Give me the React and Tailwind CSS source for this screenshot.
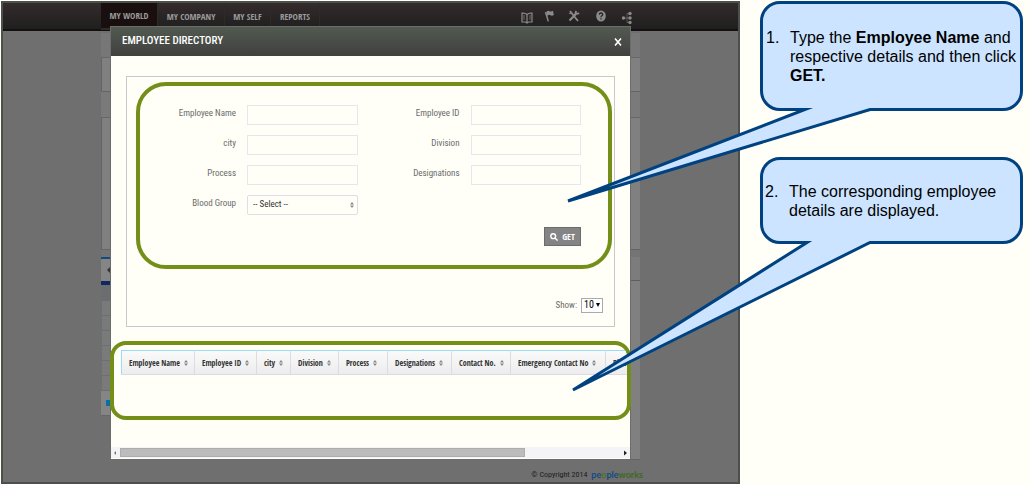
const dirLabel = 'text-right text-[9px] leading-4 text-[#6a6a6a] font-["Roboto_Condensed","Liberation_Sans",sans-serif]';

const navItems = [
  { label: 'MY WORLD', cls: 'w-[57px] bg-[#190f0f] border-b-2 border-[#0d4a66]' },
  { label: 'MY COMPANY', cls: 'w-[67px]' },
  { label: 'MY SELF', cls: 'w-[46px]' },
  { label: 'REPORTS', cls: 'w-[49px]' },
];

const columns = [
  ['Employee Name', 'w-[73px]'],
  ['Employee ID', 'w-[62px]'],
  ['city', 'w-[34px]'],
  ['Division', 'w-[48px]'],
  ['Process', 'w-[49px]'],
  ['Designations', 'w-[64px]'],
  ['Contact No.', 'w-[59px]'],
  ['Emergency Contact No', 'w-[95px]'],
  ['Blood Group', 'w-[70px]'],
];

function Sorter() {
  return (
    <svg viewBox="0 0 4 6" className="block h-[6px] w-[4px] shrink-0" fill="#888">
      <path d="M2 0L4 2.4H0zM2 6L0 3.6H4z" />
    </svg>
  );
}

function TopIcons() {
  return (
    <div className="flex h-[26px] items-center text-[#8b8b8b]">
      <button aria-label="Handbook" className="flex w-[22px] justify-center pt-1">
        <svg viewBox="0 0 12 12" className="size-3" fill="none" stroke="currentColor" strokeWidth="1.2">
          <path d="M6 2.5Q4 .8 1 1.2V10h3.5L6 11l1.500-1H11V1.200Q8 .8 6 2.500zV11" />
          <path d="M3 3v5M9 3v5" strokeWidth=".7" />
        </svg>
      </button>
      <button aria-label="Flag" className="flex w-[22px] justify-center">
        <svg viewBox="0 0 10 12" className="h-3 w-[10px]" fill="currentColor">
          <path d="M.8 2.200l1.500-.5L5 11.200l-1.400.3z" />
          <path d="M2.300 2.200Q4 .2 5.600 1.200T9 .8L9.800 5Q8 6.200 6.500 5.200T3.600 6z" />
        </svg>
      </button>
      <button aria-label="Tools" className="flex w-[27px] justify-center">
        <svg viewBox="0 0 12 12" className="size-3" fill="none" stroke="currentColor">
          <path d="M2 1l3.500 4.500L10 11" strokeWidth="1.800" />
          <path d="M1.500 10.500L8 4" strokeWidth="2.200" />
          <path d="M8 .8L7.400 4l3.800-.6" strokeWidth="1.800" />
          <path d="M1 3.500L4 3" />
        </svg>
      </button>
      <button aria-label="Help" className="flex w-[27px] justify-center">
        <svg viewBox="0 0 12 12" className="size-3">
          <ellipse cx="6" cy="6" rx="4.800" ry="5.600" fill="currentColor" />
          <path d="M4.300 4.600Q4.500 3 6 3T7.700 4.500Q7.700 5.300 6.800 5.800T6 7.300M6 8.200V9.500" fill="none" stroke="#242424" strokeWidth="1.300" />
        </svg>
      </button>
      <button aria-label="Organisation" className="flex w-[26px] justify-center pt-1">
        <svg viewBox="0 0 12 14" className="h-[14px] w-3" fill="currentColor">
          <circle cx="2.500" cy="7" r="1.700" />
          <circle cx="9" cy="2.500" r="1.700" />
          <circle cx="9" cy="7" r="1.700" />
          <circle cx="9" cy="11.500" r="1.700" />
          <path d="M4 7h4M6 7V2.500h2M6 7v4.500h2" fill="none" stroke="currentColor" strokeWidth=".5" />
        </svg>
      </button>
    </div>
  );
}

function LedgerRow() {
  return (
    <div className="flex h-[15px]">
      <div className="w-1/2 border-b border-l border-[#6b7075] bg-[#7a7a7a]" />
      <div className="w-1/2 bg-[#808080]" />
    </div>
  );
}

function Backdrop() {
  return (
    <div aria-hidden="true" className="flex flex-1 flex-col px-[98px] pt-[2px]">
      <div className="h-[25px] border-b border-[#686868] bg-[#777]" />
      <div className="h-[34px] border-l border-b border-[#646464] bg-[#808080]" />
      <div className="h-[26px] border-b border-[#666] bg-[#7a7a7a]" />
      <div className="h-[132px] border-l border-b border-[#646464] bg-[#808080]" />
      <div className="h-[7px] bg-[#747474]" />
      <div className="flex h-[24px]">
        <div className="flex w-1/2 items-center border-t-2 border-[#134a84] bg-[#858585] pl-[6px]">
          <svg viewBox="0 0 6 8" className="h-2 w-[6px]" fill="#333"><path d="M4 0v8L0 4z" /></svg>
        </div>
        <div className="w-1/2 border-b border-[#5e5e5e] bg-[#7c7c7c]" />
      </div>
      <div className="flex h-[4px]"><div className="w-1/2 bg-[#0c2a5c]" /><div className="w-1/2 bg-[#808080]" /></div>
      <div className="flex h-[16px]"><div className="w-1/2 bg-[#6b6d70]" /><div className="w-1/2 bg-[#808080]" /></div>
      <LedgerRow />
      <LedgerRow />
      <LedgerRow />
      <LedgerRow />
      <LedgerRow />
      <LedgerRow />
      <div className="flex h-[25px]">
        <div className="flex w-1/2 items-center border-b border-[#666] bg-[#858585] pl-[5px]">
          <div className="h-[6px] w-3 bg-[#0a6ea8]" />
        </div>
        <div className="w-1/2 bg-[#808080]" />
      </div>
      <div className="flex flex-1">
        <div className="w-1/2" />
        <div className="w-1/2 border-b border-[#646464] bg-[#808080]" />
      </div>
    </div>
  );
}

function Field({ id, label }) {
  return (
    <>
      <label htmlFor={id} className={dirLabel}>{label}</label>
      <input id={id} type="text" className="h-5 w-full min-w-0 border border-[#e6e6ee] bg-transparent px-1 text-[10px]" />
    </>
  );
}

function Dialog() {
  return (
    <section role="dialog" aria-labelledby="dlg-title" className="flex w-full flex-col border border-[#6a6d6a] bg-[#fffff8]">
      <header className="flex h-[29px] items-center justify-between bg-linear-to-b from-[#525a50] to-[#404040] pr-2 pl-[11px]">
        <h1 id="dlg-title" className='font-["Roboto_Condensed","Liberation_Sans",sans-serif] text-[11px] font-medium text-white'>EMPLOYEE DIRECTORY</h1>
        <button aria-label="Close" className="flex w-3 justify-end">
          <svg viewBox="0 0 8 8" className="size-2" stroke="#fff" strokeWidth="1.600"><path d="M1 .5l6 7M7 .5l-6 7" /></svg>
        </button>
      </header>
      <div className="mx-[15px] mt-[20px] border border-[#c9c9cd] pb-[13px]">
        <form className="mt-[5px] mr-[2px] ml-[9px] rounded-[30px] border-4 border-[#748f18] pt-[19px] pr-[27px] pb-[19px] pl-[16px]" onSubmit={(e) => e.preventDefault()}>
          <div className="grid grid-cols-[80px_1fr_91px_1fr] gap-x-[11px] gap-y-[10px]">
            <Field id="emp-name" label="Employee Name" />
            <Field id="emp-id" label="Employee ID" />
            <Field id="city" label="city" />
            <Field id="division" label="Division" />
            <Field id="process" label="Process" />
            <Field id="designations" label="Designations" />
            <label htmlFor="blood" className={dirLabel}>Blood Group</label>
            <div className="relative">
              <select id="blood" className='block h-5 w-full appearance-none rounded-[2px] border border-[#dedee6] bg-transparent pl-[5px] font-["Roboto_Condensed","Liberation_Sans",sans-serif] text-[9px] text-[#333]'>
                <option>-- Select --</option>
              </select>
              <span className="pointer-events-none absolute top-[7px] right-[4px]"><Sorter /></span>
            </div>
          </div>
          <div className="mt-[12px] flex justify-end">
            <button type="submit" className='flex h-[19px] w-[37px] items-center justify-center gap-1 border border-[#6c6c6c] bg-[#848484] font-["Open_Sans_Condensed","Roboto_Condensed","Liberation_Sans",sans-serif] text-[9px] font-bold text-white'>
              <svg viewBox="0 0 8 8" className="size-2" fill="none" stroke="#fff" strokeWidth="1.400"><circle cx="3.200" cy="3.200" r="2.400" /><path d="M5 5l2.600 2.600" /></svg>
              GET
            </button>
          </div>
        </form>
        <div className="mt-[28px] mr-[11px] flex items-center justify-end gap-1">
          <label htmlFor="show" className={dirLabel}>Show:</label>
          <div className="relative">
            <select id="show" className='block h-[15px] w-[22px] appearance-none border border-[#aaa] bg-white pl-[2px] font-["Roboto_Condensed","Liberation_Sans",sans-serif] text-[10px] leading-3 text-black'>
              <option>10</option>
            </select>
            <svg viewBox="0 0 4 4" className="pointer-events-none absolute top-[5px] right-[3px] size-1"><path d="M0 0h4L2 4z" /></svg>
          </div>
        </div>
      </div>
      <div className="-mx-px mt-[14px] h-[79px] overflow-hidden rounded-2xl border-4 border-[#748f18] pt-[5px] pl-[7px]">
        <div className="overflow-hidden">
          <table className="w-[554px] table-fixed border-t border-l border-[#9adcf5]">
            <thead>
              <tr className='h-6 bg-linear-to-b from-[#fafafa] to-[#ececee] font-["Open_Sans_Condensed","Roboto_Condensed","Liberation_Sans",sans-serif] text-[8px] font-bold text-[#333]'>
                {columns.map(([name, w]) => (
                  <th key={name} scope="col" className={`${w} border-r border-b border-[#dcdce0] whitespace-nowrap`}>
                    <span className="flex items-center gap-1 pl-[7px]">{name}<Sorter /></span>
                  </th>
                ))}
              </tr>
            </thead>
          </table>
        </div>
      </div>
      <div aria-hidden="true" className="mt-[27px] mb-px flex h-[11px] items-center bg-[#f4f4f6]">
        <svg viewBox="0 0 9 8" className="h-2 w-[9px]" fill="#777"><path d="M5 2v4L3 4z" /></svg>
        <div className="h-[9px] w-[78%] border border-[#adadad] bg-[#bcbcbc]" />
        <svg viewBox="0 0 9 8" className="ml-auto h-2 w-[9px]" fill="#222"><path d="M3 1.500v5L6 4z" /></svg>
      </div>
    </section>
  );
}

function Tail({ box, tip }) {
  const [left, right, y] = box;
  return (
    <svg aria-hidden="true" className="pointer-events-none absolute top-0 left-0 size-px overflow-visible">
      <path d={`M${left} ${y - 3}H${right}V${y + 2}H${left}z`} fill="#cce4ff" />
      <path d={`M${left - 6} ${y}H${left}L${tip[0]} ${tip[1]}L${right} ${y}h6`} fill="#cce4ff" stroke="#00427f" strokeWidth="3" strokeMiterlimit="6" />
    </svg>
  );
}

export default function App() {
  return (
    <div className="flex min-h-screen bg-[#fffff7]">
      <main className="relative mt-px ml-px flex min-h-[483px] min-w-0 flex-1 flex-col border-2 border-[#4c504c] bg-[#6f6f6f]">
        <div className="flex h-[28px] items-start justify-between border-b-2 border-[#151010] bg-linear-to-b from-[#352b2b] to-[#1f1f1f] px-[98px]">
          <nav className='flex font-["Open_Sans_Condensed","Roboto_Condensed","Liberation_Sans",sans-serif] text-[9px] font-bold text-[#9a9a9a]'>
            {navItems.map((n) => (
              <a key={n.label} href="#" className={`flex h-[27px] items-center justify-center border-r border-[#2f2a2a] ${n.cls}`}>{n.label}</a>
            ))}
          </nav>
          <TopIcons />
        </div>
        <Backdrop />
        <footer className='flex h-[22px] items-center justify-end gap-1 pt-2 pr-[95px] font-["Roboto_Condensed","Liberation_Sans",sans-serif] text-[8px] text-[#1c1c1c]'>
          <span>© Copyright 2014</span>
          <span className="font-[Lato,sans-serif] text-[9px] leading-3 font-bold">
            <span className="text-[#124a80]">pe</span><span className="text-[#4c7420]">o</span><span className="text-[#124a80]">ple</span><span className="text-[#3f6a1c]">works</span>
          </span>
        </footer>
        <div className="absolute inset-x-0 top-0 flex px-[107px] pt-[23px]">
          <Dialog />
        </div>
      </main>
      <aside className='relative w-[290px] shrink-0 pt-px pr-[7px] pl-[20px] font-["Liberation_Sans",Arial,sans-serif] text-base leading-[19px] text-black'>
        <ol>
          <li className="relative flex min-h-[110px] rounded-[20px] border-3 border-[#00427f] bg-[#cce4ff] pt-[24px]">
            <Tail box={[42, 107, 105.5]} tip={[-195, 197]} />
            <span className="w-[27px] shrink-0 pl-[3px]">1.</span>
            <p>Type the <b>Employee Name</b> and respective details and then click <b>GET.</b></p>
          </li>
          <li className="relative mt-[46px] flex min-h-[87px] rounded-[20px] border-3 border-[#00427f] bg-[#cce4ff] pt-[22px]">
            <Tail box={[44, 107, 82.5]} tip={[-190, 230]} />
            <span className="w-[26px] shrink-0 pl-[2px]">2.</span>
            <p>The corresponding employee details are displayed.</p>
          </li>
        </ol>
      </aside>
    </div>
  );
}
